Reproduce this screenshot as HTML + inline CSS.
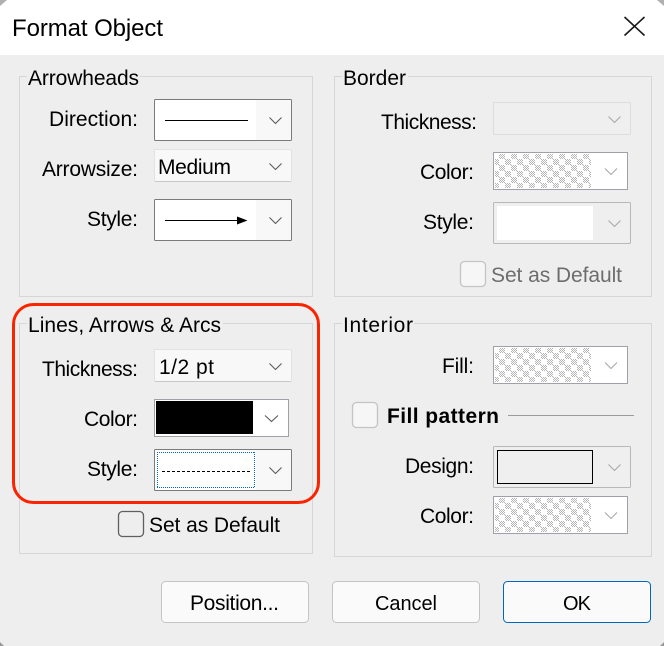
<!DOCTYPE html>
<html><head><meta charset="utf-8"><style>
html,body{margin:0;padding:0;background:#eee;width:664px;height:646px;overflow:hidden}
svg{display:block}
text{font-family:"Liberation Sans",sans-serif;font-size:21px;fill:#000}
.g{fill:#6d6d6d}
</style></head><body>
<svg width="664" height="646" viewBox="0 0 664 646" xmlns="http://www.w3.org/2000/svg">
<defs>
<pattern id="d" width="2" height="2" patternUnits="userSpaceOnUse"><rect width="2" height="2" fill="#fff"/><rect width="1" height="1" fill="#b4b4b4"/><rect x="1" y="1" width="1" height="1" fill="#b4b4b4"/></pattern>
<pattern id="c1" x="499" y="153" width="12" height="12" patternUnits="userSpaceOnUse"><rect width="12" height="12" fill="#fff"/><rect width="6" height="6" fill="url(#d)"/><rect x="6" y="6" width="6" height="6" fill="url(#d)"/></pattern>
<pattern id="c2" x="499" y="347" width="12" height="12" patternUnits="userSpaceOnUse"><rect width="12" height="12" fill="#fff"/><rect width="6" height="6" fill="url(#d)"/><rect x="6" y="6" width="6" height="6" fill="url(#d)"/></pattern>
<pattern id="c3" x="499" y="497" width="12" height="12" patternUnits="userSpaceOnUse"><rect width="12" height="12" fill="#fff"/><rect width="6" height="6" fill="url(#d)"/><rect x="6" y="6" width="6" height="6" fill="url(#d)"/></pattern>
</defs>
<rect width="664" height="646" fill="#eee"/>
<rect width="664" height="55" fill="#fff"/>
<path d="M0 0H7L0 6Z" fill="#b0b0b0"/><path d="M657 0H664V6Z" fill="#b0b0b0"/><path d="M660 646L664 642V646Z" fill="#999"/><path d="M0 642L4 646H0Z" fill="#999"/>
<text x="12" y="36" textLength="151" lengthAdjust="spacing" style="font-size:24px" fill="#111">Format Object</text>
<path d="M624.5 17L644.5 35.5M644.5 17L624.5 35.5" stroke="#1a1a1a" stroke-width="1.6" fill="none"/>

<!-- group boxes -->
<g fill="none" stroke="#d6d6d6" stroke-width="1">
<rect x="19.5" y="76.5" width="293" height="220"/>
<rect x="334.5" y="76.5" width="317" height="220"/>
<rect x="19.5" y="323.5" width="293" height="230"/>
<rect x="334.5" y="323.5" width="317" height="233"/>
</g>
<g fill="#eee">
<rect x="27" y="70" width="113" height="12"/>
<rect x="342" y="70" width="66" height="12"/>
<rect x="27" y="317" width="196" height="12"/>
<rect x="342" y="317" width="72" height="12"/>
</g>
<text x="28" y="85" textLength="111">Arrowheads</text>
<text x="343" y="85" textLength="63">Border</text>
<text x="28" y="332" textLength="193">Lines, Arrows &amp; Arcs</text>
<text x="343" y="332" textLength="70">Interior</text>

<!-- left labels -->
<text x="49" y="126" textLength="89">Direction:</text>
<text x="42" y="176" textLength="96">Arrowsize:</text>
<text x="87" y="226" textLength="51">Style:</text>
<text x="42" y="376" textLength="96">Thickness:</text>
<text x="84" y="426" textLength="54">Color:</text>
<text x="87" y="476" textLength="51">Style:</text>
<text x="149" y="532" textLength="131">Set as Default</text>

<!-- Direction -->
<rect x="154.5" y="99.5" width="137" height="41" rx="1" fill="#fff" stroke="#7a7a7a"/>
<rect x="256" y="100" width="35" height="40" fill="#f8f8f8"/>
<rect x="165" y="120" width="83" height="1" fill="#000"/>
<!-- Arrowsize -->
<rect x="154.5" y="149.5" width="137" height="32" rx="1" fill="#f8f8f8" stroke="#e2e2e2"/>
<path d="M155 181.5H291" stroke="#c8c8c8"/>
<text x="158" y="174" textLength="73">Medium</text>
<!-- Style arrow -->
<rect x="154.5" y="199.5" width="137" height="41" rx="1" fill="#fff" stroke="#7a7a7a"/>
<rect x="256" y="200" width="35" height="40" fill="#f8f8f8"/>
<rect x="165" y="220" width="74" height="1" fill="#000"/>
<path d="M237 216.5L247.5 220.5L237 224.5Z" fill="#000"/>
<!-- Thickness -->
<rect x="154.5" y="349.5" width="137" height="32" rx="1" fill="#f8f8f8" stroke="#e2e2e2"/>
<path d="M155 381.5H291" stroke="#c8c8c8"/>
<text x="159" y="374" textLength="55">1/2 pt</text>
<!-- Color black -->
<rect x="154.5" y="399.5" width="134" height="37" fill="#fff" stroke="#a0a0a8"/>
<rect x="156" y="401" width="97" height="33" fill="#000"/>
<!-- Style dashed -->
<rect x="154.5" y="449.5" width="137" height="41" rx="1" fill="#fff" stroke="#7a7a7a"/>
<rect x="256" y="450" width="35" height="40" fill="#f8f8f8"/>
<g fill="none" stroke="#0067c0" stroke-dasharray="1 1">
<path d="M157 452.5H255"/><path d="M157 487.5H255"/><path d="M157.5 452V488"/><path d="M254.5 452V488"/>
</g>
<path d="M162 471.5H251" stroke="#000" stroke-dasharray="3 2"/>

<!-- Set default left -->
<rect x="118.5" y="511.5" width="25" height="25" rx="4" fill="#eee" stroke="#5f5f5f" stroke-width="1.3"/>

<!-- Right labels -->
<text x="381" y="129" textLength="96">Thickness:</text>
<text x="420" y="179" textLength="54">Color:</text>
<text x="423" y="229" textLength="51">Style:</text>
<text x="491" y="282" textLength="131" class="g" style="fill:#6d6d6d">Set as Default</text>
<text x="442" y="373" textLength="32">Fill:</text>
<text x="387" y="423" textLength="112" style="font-weight:bold">Fill pattern</text>
<text x="405" y="473" textLength="69">Design:</text>
<text x="420" y="523" textLength="54">Color:</text>

<!-- Border thickness -->
<rect x="493.5" y="102.5" width="137" height="32" rx="1" fill="#efefef" stroke="#dcdcdc"/>
<!-- Border color -->
<rect x="493.5" y="152.5" width="134" height="37" fill="#fff" stroke="#a0a0a8"/>
<rect x="495" y="154" width="96" height="34" fill="url(#c1)"/>
<!-- Border style -->
<rect x="493.5" y="202.5" width="137" height="41" rx="1" fill="#efefef" stroke="#b8b8b8"/>
<rect x="497" y="206" width="96" height="34" fill="#fff"/>
<!-- Checkbox disabled -->
<rect x="460.5" y="261.5" width="25" height="25" rx="4" fill="#f6f6f6" stroke="#c4c4c4" stroke-width="1.3"/>

<!-- Fill -->
<rect x="493.5" y="346.5" width="134" height="37" fill="#fff" stroke="#a0a0a8"/>
<rect x="495" y="348" width="96" height="34" fill="url(#c2)"/>
<!-- Fill pattern -->
<rect x="352.5" y="402.5" width="25" height="25" rx="4" fill="#f6f6f6" stroke="#c4c4c4" stroke-width="1.3"/>
<rect x="508" y="415" width="126" height="1" fill="#9a9a9a"/>
<!-- Design -->
<rect x="493.5" y="446.5" width="137" height="41" rx="1" fill="#efefef" stroke="#b8b8b8"/>
<rect x="497.5" y="450.5" width="95" height="33" fill="#efefef" stroke="#000"/>
<!-- Color -->
<rect x="493.5" y="496.5" width="134" height="37" fill="#fff" stroke="#a0a0a8"/>
<rect x="495" y="498" width="96" height="34" fill="url(#c3)"/>

<!-- Chevrons -->
<g fill="none" stroke="#5a5a5a" stroke-width="1.1">
<path d="M269.5 117.5L275.5 123.5L281.5 117.5"/>
<path d="M269.5 163.5L275.5 169.5L281.5 163.5"/>
<path d="M269.5 217.5L275.5 223.5L281.5 217.5"/>
<path d="M269.5 363.5L275.5 369.5L281.5 363.5"/>
<path d="M265 415.5L271.5 421.5L278 415.5"/>
<path d="M269.5 467.5L275.5 473.5L281.5 467.5"/>
</g>
<g fill="none" stroke="#a8a8a8" stroke-width="1.1">
<path d="M608.5 116.5L614.5 122.5L620.5 116.5"/>
<path d="M605 168.5L611 174.5L617 168.5"/>
<path d="M608.5 220.5L614.5 226.5L620.5 220.5"/>
<path d="M605 362.5L611 368.5L617 362.5"/>
<path d="M608.5 464.5L614.5 470.5L620.5 464.5"/>
<path d="M605 512.5L611 518.5L617 512.5"/>
</g>

<!-- Buttons -->
<rect x="161.5" y="581.5" width="147" height="41" rx="4" fill="#fafafa" stroke="#c4c4c4"/>
<rect x="332.5" y="581.5" width="147" height="41" rx="4" fill="#fafafa" stroke="#c4c4c4"/>
<rect x="503.5" y="581.5" width="147" height="41" rx="4" fill="#fafafa" stroke="#0067c0"/>
<text x="190" y="610" textLength="89">Position...</text>
<text x="375" y="610" textLength="62" style="font-size:20px">Cancel</text>
<text x="563" y="610" textLength="28" style="font-size:20px">OK</text>

<!-- Red highlight -->
<rect x="13.5" y="304.5" width="305" height="198" rx="20" fill="none" stroke="#fa2400" stroke-width="3"/>
</svg>
</body></html>
